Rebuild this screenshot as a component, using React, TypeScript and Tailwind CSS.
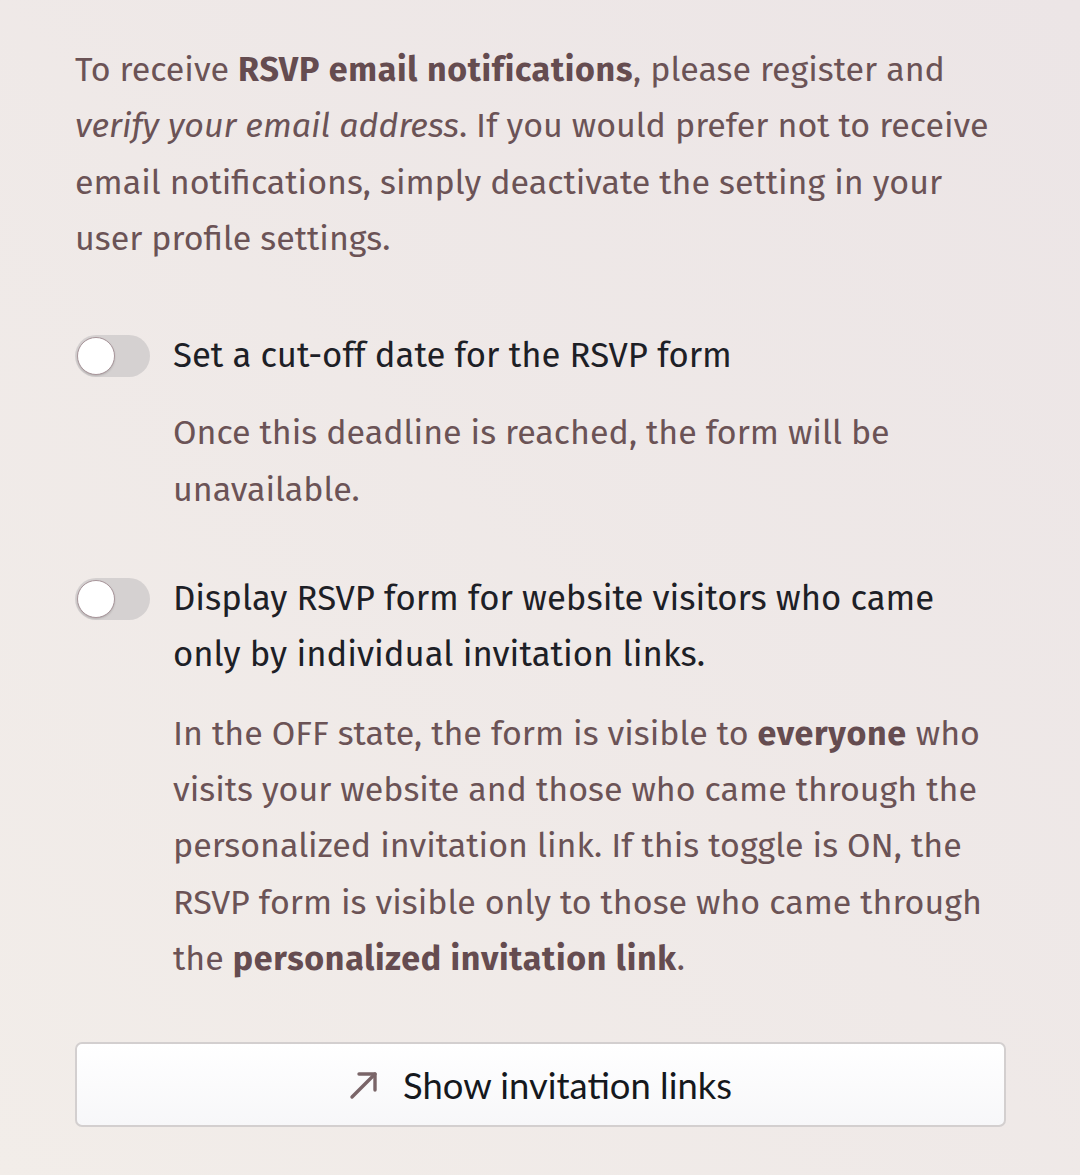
import React from "react";

function Toggle() {
  return (
    <div className="relative mt-[7px] h-[42px] w-[75px] shrink-0 rounded-full bg-[#d5d1d1]">
      <div className="absolute left-[2px] top-[2px] h-[38px] w-[38px] rounded-full border-[1.5px] border-[#a8959a] bg-white shadow-[0_1px_2px_rgba(0,0,0,0.15)]" />
    </div>
  );
}

function B({ children }: { children: React.ReactNode }) {
  return <b className="font-bold tracking-[0.7px] text-[#654c50]">{children}</b>;
}

export default function App() {
  return (
    <div
      className="min-h-[1175px] w-[1080px] bg-gradient-to-bl from-[#ece5e6] to-[#f2ede9] px-[75px] pt-[42px] text-[34px] leading-[56.3px] text-[#6b5356]"
      style={{ fontFamily: '"Fira Sans", "Open Sans", sans-serif' }}
    >
      <p className="w-[931px]">
        To receive <B>RSVP email notifications</B>, please register and <i>verify your email address</i>. If you
        would prefer not to receive email notifications, simply deactivate the setting in your user profile settings.
      </p>

      <div className="mt-[61px] flex gap-[23px]">
        <Toggle />
        <div className="flex-1">
          <div className="text-[34.7px] text-[#1d2026]">Set a cut-off date for the RSVP form</div>
          <p className="mt-[21px]">Once this deadline is reached, the form will be unavailable.</p>
        </div>
      </div>

      <div className="mt-[53px] flex gap-[23px]">
        <Toggle />
        <div className="flex-1">
          <div className="text-[34.7px] text-[#1d2026]">
            Display RSVP form for website visitors who came only by individual invitation links.
          </div>
          <p className="mt-[22px]">
            In the OFF state, the form is visible to <B>everyone</B> who visits your website and those who came
            through the personalized invitation link. If this toggle is ON, the RSVP form is visible only to those who
            came through the <B>personalized invitation link</B>.
          </p>
        </div>
      </div>

      <button
        className="mt-[55px] flex h-[85px] w-[931px] items-center justify-center gap-[24px] rounded-[7px] border-2 border-[#d3cfcf] bg-gradient-to-b from-white to-[#f7f7f9] text-[36.4px] text-[#15181d]"
        style={{ fontFamily: "Lato, sans-serif" }}
      >
        <svg width="30" height="30" viewBox="0 0 30 30" fill="none" stroke="#7a6568" strokeWidth="3.4" strokeLinecap="round" strokeLinejoin="round">
          <path d="M3 27 L26 4" />
          <path d="M10 4 H26 V20" />
        </svg>
        <span>Show invitation links</span>
      </button>
    </div>
  );
}
